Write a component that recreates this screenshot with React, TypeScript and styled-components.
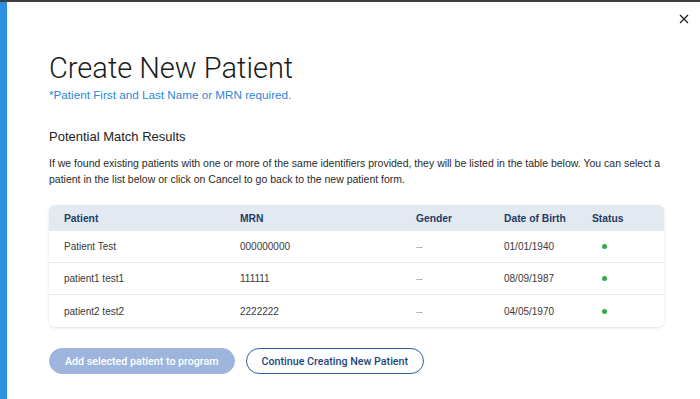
import React from "react";
import styled, { createGlobalStyle } from "styled-components";

const GlobalStyle = createGlobalStyle`
  html, body {
    margin: 0;
    padding: 0;
    background: #ffffff;
    font-family: "Liberation Sans", Arial, sans-serif;
  }
`;

const Page = styled.div`
  display: flex;
  width: 700px;
  height: 399px;
  border-top: 2px solid #3d3d3f;
  box-sizing: border-box;
  overflow: hidden;
`;

const SideBar = styled.div`
  width: 7px;
  flex-shrink: 0;
  background: #2b8fe2;
`;

const Modal = styled.div`
  position: relative;
  flex: 1;
  padding: 49px 36px 0 42px;
`;

const CloseButton = styled.button`
  position: absolute;
  top: 9px;
  right: 8px;
  width: 16px;
  height: 16px;
  padding: 0;
  border: none;
  background: none;
  display: flex;
  align-items: center;
  justify-content: center;
  cursor: pointer;
`;

const Title = styled.h1`
  margin: 0;
  font-family: Roboto, "Liberation Sans", sans-serif;
  font-weight: 300;
  font-size: 29px;
  line-height: 34px;
  color: #1b1b1b;
`;

const Required = styled.p`
  margin: 2px 0 0;
  font-size: 11.7px;
  line-height: 16px;
  color: #2d88d8;
`;

const SectionTitle = styled.h2`
  margin: 25px 0 0;
  font-size: 13px;
  font-weight: 400;
  line-height: 18px;
  color: #222;
`;

const Intro = styled.p`
  margin: 9px 0 0;
  font-size: 10.5px;
  line-height: 16px;
  color: #2a2a2a;
`;

const Table = styled.div`
  margin-top: 18px;
  border-radius: 6px;
  overflow: hidden;
  box-shadow: 0 1px 3px rgba(0, 0, 0, 0.12);
`;

const Row = styled.div<{ head?: boolean; last?: boolean }>`
  display: grid;
  grid-template-columns: 176px 176px 88px 88px 1fr;
  align-items: center;
  padding-left: 15px;
  height: ${(p) => (p.head ? "26px" : "32px")};
  background: ${(p) => (p.head ? "#e3e9f0" : "#ffffff")};
  border-bottom: ${(p) => (p.head || p.last ? "none" : "1px solid #ebebeb")};
  box-sizing: border-box;
`;

const HeadCell = styled.div`
  font-size: 10.3px;
  font-weight: 700;
  color: #1e3d66;
`;

const Cell = styled.div<{ muted?: boolean }>`
  font-size: 10px;
  color: ${(p) => (p.muted ? "#9a9a9a" : "#3a3a3a")};
`;

const Dot = styled.span`
  display: block;
  width: 5px;
  height: 5px;
  margin-left: 10px;
  border-radius: 50%;
  background: #2eae4a;
`;

const Actions = styled.div`
  display: flex;
  gap: 11px;
  margin-top: 21px;
`;

const Button = styled.button<{ outline?: boolean }>`
  height: 26px;
  padding: 0 15px;
  border-radius: 13px;
  font-family: Roboto, "Liberation Sans", sans-serif;
  font-size: 10.7px;
  font-weight: 500;
  border: 1px solid ${(p) => (p.outline ? "#2f5f9e" : "#9db5dc")};
  background: ${(p) => (p.outline ? "#ffffff" : "#9db5dc")};
  color: ${(p) => (p.outline ? "#1d4680" : "#ffffff")};
  cursor: pointer;
`;

const patients = [
  { name: "Patient Test", mrn: "000000000", gender: "--", dob: "01/01/1940" },
  { name: "patient1 test1", mrn: "111111", gender: "--", dob: "08/09/1987" },
  { name: "patient2 test2", mrn: "2222222", gender: "--", dob: "04/05/1970" },
];

const App = () => {
  return (
    <>
      <GlobalStyle />
      <Page>
        <SideBar />
        <Modal>
          <CloseButton aria-label="Close">
            <svg width="10" height="10" viewBox="0 0 10 10">
              <path d="M1 1L9 9M9 1L1 9" stroke="#222" strokeWidth="1.3" />
            </svg>
          </CloseButton>
          <Title>Create New Patient</Title>
          <Required>*Patient First and Last Name or MRN required.</Required>
          <SectionTitle>Potential Match Results</SectionTitle>
          <Intro>
            If we found existing patients with one or more of the same identifiers provided, they will be listed in the
            table below. You can select a patient in the list below or click on Cancel to go back to the new patient form.
          </Intro>
          <Table>
            <Row head>
              <HeadCell>Patient</HeadCell>
              <HeadCell>MRN</HeadCell>
              <HeadCell>Gender</HeadCell>
              <HeadCell>Date of Birth</HeadCell>
              <HeadCell>Status</HeadCell>
            </Row>
            {patients.map((p, i) => (
              <Row key={p.mrn} last={i === patients.length - 1}>
                <Cell>{p.name}</Cell>
                <Cell>{p.mrn}</Cell>
                <Cell muted>{p.gender}</Cell>
                <Cell>{p.dob}</Cell>
                <Cell>
                  <Dot />
                </Cell>
              </Row>
            ))}
          </Table>
          <Actions>
            <Button>Add selected patient to program</Button>
            <Button outline>Continue Creating New Patient</Button>
          </Actions>
        </Modal>
      </Page>
    </>
  );
};

export default App;
